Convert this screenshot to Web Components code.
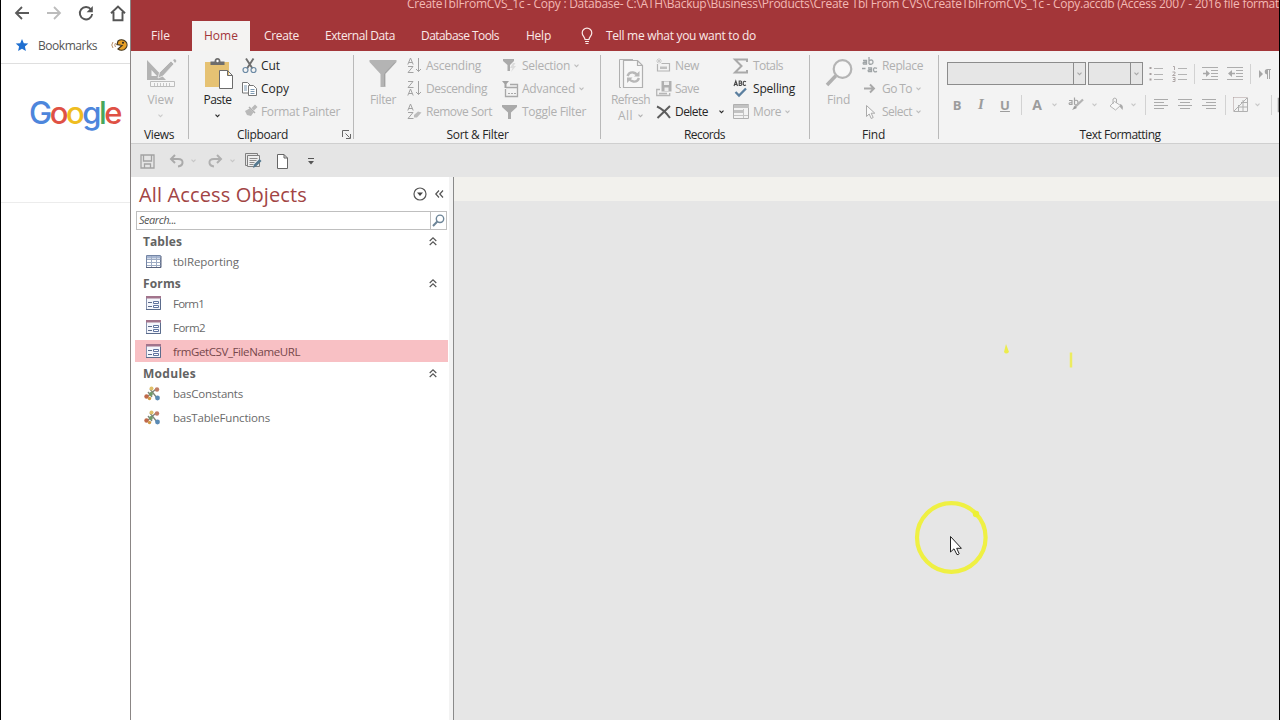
<!DOCTYPE html>
<html lang="en">
<head>
<meta charset="utf-8">
<title>Access</title>
<style>
    html, body { margin: 0; height: 100%; overflow: hidden; }
    body { display: flex; background: #fff; color: #262626; font: 12px "Open Sans", "Noto Sans", sans-serif; }
</style>
</head>
<body>
    <browser-strip></browser-strip>
    <access-window></access-window>
    <pointer-marks></pointer-marks>

    <template id="browserTemplate">
        <style>
            :host { display: flex; flex-direction: column; width: 130px; height: 720px; flex: none; box-sizing: border-box; border-left: 1px solid #000; background: #fff; overflow: hidden; }
            .nav { display: flex; gap: 16px; padding: 5px 0 0 13px; height: 22px; }
            .nav ui-icon { flex: none; }
            .marks { display: flex; align-items: center; height: 36px; padding-left: 14px; border-bottom: 1px solid #dfdfdf; color: #555; }
            .marks fit-text { margin-left: 9px; }
            .marks ui-icon:last-child { margin-left: 14px; }
            .page { height: 139px; border-bottom: 1px solid #ececec; box-sizing: border-box; padding: 29px 0 0 28px; }
            .logo { font: 500 31px/40px Inter, sans-serif; color: #4d86dc; }
            .r { color: #df5145 } .y { color: #efbd20 } .g { color: #46a75c }
        </style>
        <div class="nav"><ui-icon name="back"></ui-icon><ui-icon name="forward"></ui-icon><ui-icon name="reload"></ui-icon><ui-icon name="home"></ui-icon></div>
        <div class="marks"><ui-icon name="star"></ui-icon><fit-text w="59">Bookmarks</fit-text><ui-icon name="pac"></ui-icon></div>
        <div class="page"><fit-text class="logo" w="91">G<span class="r">o</span><span class="y">o</span>g<span class="g">l</span><span class="r">e</span></fit-text></div>
    </template>

    <template id="windowTemplate">
        <style>
            :host { display: flex; flex-direction: column; width: 1150px; height: 720px; box-sizing: border-box; border-left: 1px solid #8b8685; border-right: 1px solid #000; background: #e6e6e6; overflow: hidden; }
            .title { height: 21px; flex: none; background: #a33639; color: #f3b9b5; padding-left: 276px; overflow: hidden; }
            .title fit-text { margin-top: -5px; line-height: 18px; }
            .tabs { display: flex; align-items: center; height: 30px; flex: none; background: #a33639; color: #fbe9e8; }
            .tabs fit-text { line-height: 30px; }
            .home { background: #f4f3f2; color: #a33639; height: 30px; width: 58px; margin: 0 14px 0 22px; text-align: center; box-sizing: border-box; padding-left: 12px; }
            .ribbon { display: flex; height: 92px; flex: none; background: #f3f3f3; border-bottom: 1px solid #cfcfcf; }
            .qat { display: flex; align-items: center; height: 33px; flex: none; padding-left: 9px; padding-top: 1px; box-sizing: border-box; background: #e5e5e5; }
            .main { display: flex; flex: 1; }
            .work { flex: 1; background: #e6e6e6; }
            .work div { height: 24px; background: #f2f1ed; }
        </style>
        <div class="title"><fit-text w="872">CreateTblFromCVS_1c - Copy : Database- C:\ATH\Backup\Business\Products\Create Tbl From CVS\CreateTblFromCVS_1c - Copy.accdb (Access 2007 - 2016 file format</fit-text></div>
        <div class="tabs">
            <fit-text w="19" style="margin-left:20px">File</fit-text>
            <div class="home"><fit-text w="34">Home</fit-text></div>
            <fit-text w="35">Create</fit-text>
            <fit-text w="70" style="margin-left:26px">External Data</fit-text>
            <fit-text w="78" style="margin-left:26px">Database Tools</fit-text>
            <fit-text w="25" style="margin-left:27px">Help</fit-text>
            <ui-icon name="bulb" style="margin-left:30px"></ui-icon>
            <fit-text w="150" style="margin-left:13px">Tell me what you want to do</fit-text>
        </div>
        <div class="ribbon">
            <ribbon-group style="width:58px" label="Views" lw="30" shift="-2">
                <big-button icon="view" off more style="width:56px"><fit-text w="26">View</fit-text></big-button>
            </ribbon-group>
            <ribbon-group style="width:165px" label="Clipboard" lw="51" shift="-18" launcher>
                <big-button icon="paste" more style="width:54px"><fit-text w="28">Paste</fit-text></big-button>
                <command-list>
                    <ribbon-command icon="cut"><fit-text w="19">Cut</fit-text></ribbon-command>
                    <ribbon-command icon="copy"><fit-text w="28">Copy</fit-text></ribbon-command>
                    <ribbon-command icon="brush" off><fit-text w="79">Format Painter</fit-text></ribbon-command>
                </command-list>
            </ribbon-group>
            <ribbon-group style="width:247px" label="Sort &amp; Filter" lw="62">
                <big-button icon="filter" off style="width:54px;padding-left:4px"><fit-text w="26">Filter</fit-text></big-button>
                <command-list style="width:95px">
                    <ribbon-command icon="asc" off><fit-text w="55">Ascending</fit-text></ribbon-command>
                    <ribbon-command icon="desc" off><fit-text w="61">Descending</fit-text></ribbon-command>
                    <ribbon-command icon="unsort" off><fit-text w="66">Remove Sort</fit-text></ribbon-command>
                </command-list>
                <command-list style="--gap:3px">
                    <ribbon-command icon="selection" off more><fit-text w="48">Selection</fit-text></ribbon-command>
                    <ribbon-command icon="advanced" off more><fit-text w="53">Advanced</fit-text></ribbon-command>
                    <ribbon-command icon="toggle" off><fit-text w="64">Toggle Filter</fit-text></ribbon-command>
                </command-list>
            </ribbon-group>
            <ribbon-group style="width:209px" label="Records" lw="41" shift="-2">
                <big-button icon="refresh" off style="width:56px"><fit-text w="39">Refresh</fit-text><fit-text slot="second" w="15">All</fit-text></big-button>
                <command-list style="width:77px">
                    <ribbon-command icon="new" off><fit-text w="24">New</fit-text></ribbon-command>
                    <ribbon-command icon="save" off><fit-text w="24">Save</fit-text></ribbon-command>
                    <ribbon-command icon="delete" more style="--chev:11px"><fit-text w="33">Delete</fit-text></ribbon-command>
                </command-list>
                <command-list style="--gap:3px">
                    <ribbon-command icon="sigma" off><fit-text w="30">Totals</fit-text></ribbon-command>
                    <ribbon-command icon="spell"><fit-text w="42">Spelling</fit-text></ribbon-command>
                    <ribbon-command icon="more" off more><fit-text w="28">More</fit-text></ribbon-command>
                </command-list>
            </ribbon-group>
            <ribbon-group style="width:129px" label="Find" lw="23" shift="-2">
                <big-button icon="find" off style="width:53px;padding-left:4px"><fit-text w="23">Find</fit-text></big-button>
                <command-list style="--gap:3px">
                    <ribbon-command icon="replace" off><fit-text w="41">Replace</fit-text></ribbon-command>
                    <ribbon-command icon="goto" off more><fit-text w="30">Go To</fit-text></ribbon-command>
                    <ribbon-command icon="select" off more><fit-text w="30">Select</fit-text></ribbon-command>
                </command-list>
            </ribbon-group>
            <ribbon-group style="width:340px;border:0" label="Text Formatting" lw="81" shift="22">
                <text-tools></text-tools>
            </ribbon-group>
        </div>
        <div class="qat">
            <ui-icon name="disk"></ui-icon>
            <ui-icon name="undo" style="margin-left:14px"></ui-icon><ui-icon name="chev" style="margin-left:7px;color:#c6c6c6"></ui-icon>
            <ui-icon name="redo" style="margin-left:12px"></ui-icon><ui-icon name="chev" style="margin-left:7px;color:#c6c6c6"></ui-icon>
            <ui-icon name="design" style="margin-left:10px"></ui-icon>
            <ui-icon name="page" style="margin-left:15px"></ui-icon>
            <ui-icon name="custom" style="margin-left:20px"></ui-icon>
        </div>
        <div class="main">
            <nav-pane>
                <nav-group label="Tables" lw="39">
                    <nav-item icon="table"><fit-text w="66">tblReporting</fit-text></nav-item>
                </nav-group>
                <nav-group label="Forms" lw="38">
                    <nav-item icon="form"><fit-text w="31">Form1</fit-text></nav-item>
                    <nav-item icon="form"><fit-text w="32">Form2</fit-text></nav-item>
                    <nav-item icon="form" selected><fit-text w="127">frmGetCSV_FileNameURL</fit-text></nav-item>
                </nav-group>
                <nav-group label="Modules" lw="53">
                    <nav-item icon="module"><fit-text w="70">basConstants</fit-text></nav-item>
                    <nav-item icon="module"><fit-text w="97">basTableFunctions</fit-text></nav-item>
                </nav-group>
            </nav-pane>
            <div class="work"><div></div></div>
        </div>
    </template>

    <template id="toolsTemplate">
        <style>
            :host { display: block; padding: 11px 0 0 8px; color: #a8a8a8; }
            .row { display: flex; align-items: center; height: 23px; white-space: nowrap; }
            .row + .row { margin-top: 8px; }
            .row > * { flex: none; }
            .combo { display: flex; justify-content: flex-end; height: 23px; box-sizing: border-box; border: 1px solid #8c8c8c; background: #e6e6e6; margin-right: 2px; }
            .combo ui-icon { border-left: 1px solid #8c8c8c; padding: 9px 3px 0; height: 12px; }
            i.sep { width: 1px; height: 20px; background: #d2d2d2; }
            b, em, u { font-size: 13px; width: 12px; text-align: center; color: #9c9c9c; }
            em { font-family: "Liberation Serif", serif; font-size: 15px; font-weight: bold; }
            u { font-weight: bold; }
        </style>
        <div class="row">
            <div class="combo" style="width:139px"><ui-icon name="chev"></ui-icon></div>
            <div class="combo" style="width:55px"><ui-icon name="chev"></ui-icon></div>
            <ui-icon name="bullets" style="margin-left:4px"></ui-icon>
            <ui-icon name="numbers" style="margin-left:8px"></ui-icon>
            <i class="sep" style="margin-left:6px"></i>
            <ui-icon name="indent" style="margin-left:7px"></ui-icon>
            <ui-icon name="outdent" style="margin-left:8px"></ui-icon>
            <i class="sep" style="margin-left:6px"></i>
            <ui-icon name="para" style="margin-left:8px"></ui-icon>
        </div>
        <div class="row">
            <b style="margin-left:4px">B</b><em style="margin-left:12px">I</em><u style="margin-left:12px">U</u>
            <i class="sep" style="margin-left:10px"></i>
            <b style="margin-left:9px;font-size:14px">A</b><ui-icon name="chev" style="margin-left:9px;color:#c6c6c6"></ui-icon>
            <ui-icon name="marker" style="margin-left:11px"></ui-icon><ui-icon name="chev" style="margin-left:7px;color:#c6c6c6"></ui-icon>
            <ui-icon name="bucket" style="margin-left:12px"></ui-icon><ui-icon name="chev" style="margin-left:7px;color:#c6c6c6"></ui-icon>
            <i class="sep" style="margin-left:9px"></i>
            <ui-icon name="left" style="margin-left:8px"></ui-icon>
            <ui-icon name="center" style="margin-left:9px"></ui-icon>
            <ui-icon name="right" style="margin-left:9px"></ui-icon>
            <i class="sep" style="margin-left:8px"></i>
            <ui-icon name="grid" style="margin-left:7px"></ui-icon><ui-icon name="chev" style="margin-left:6px;color:#c6c6c6"></ui-icon>
            <i class="sep" style="margin-left:11px"></i>
            <ui-icon name="grid2" style="margin-left:6px"></ui-icon>
        </div>
    </template>

    <template id="paneTemplate">
        <style>
            :host { display: block; width: 323px; box-sizing: border-box; padding: 0 5px 0 4px; border-right: 1px solid #8a8a8a; background: linear-gradient(90deg, #fff 318px, #f3f3f3 318px); color: #6a6a6a; }
            .head { display: flex; align-items: center; height: 34px; color: #a24444; }
            .head fit-text { font-size: 20px; margin-left: 4px; }
            .find { display: flex; height: 19px; width: 311px; margin: 0 0 2px 1px; box-sizing: border-box; border: 1px solid #bfbfbf; font: italic 11px/16px "Open Sans", sans-serif; color: #555; }
            .find fit-text { margin-left: 2px; flex: none; }
            .find span { margin-left: auto; border-left: 1px solid #bfbfbf; padding: 2px 1px 0; }
        </style>
        <div class="head"><fit-text w="168">All Access Objects</fit-text><ui-icon name="drop" style="margin-left:106px"></ui-icon><ui-icon name="shutter" style="margin-left:8px"></ui-icon></div>
        <div class="find"><fit-text w="37">Search...</fit-text><span><ui-icon name="lens"></ui-icon></span></div>
        <slot></slot>
    </template>

    <template id="pointerTemplate">
        <style>
            :host { position: absolute; left: 900px; top: 330px; width: 200px; height: 250px; pointer-events: none; }
        </style>
        <svg width="200" height="250">
            <circle cx="51.3" cy="207.5" r="34.3" fill="none" stroke="#eff043" stroke-width="4.2"/>
            <circle cx="76" cy="184" r="3.2" fill="#ecf034"/>
            <path d="M106 14l3 8q-3 3-5 0z" fill="#ecec4c"/>
            <path d="M171 22.500v15" stroke="#ecec60" stroke-width="2.500"/>
            <path d="M50.500 206.500v15.500l3.500-3.200 2.900 5.700q1.500.500 2.300-.700l-2.500-5.500h4.700z" fill="#fff" stroke="#222" stroke-width="1"/>
        </svg>
    </template>

    <script>
        // [width, height, svg content]
        const icons = {
            back: [16, 16, '<path d="M15 8H2M8 2L2 8l6 6" fill="none" stroke="#5a5a5a" stroke-width="1.8"/>'],
            forward: [16, 16, '<path d="M1 8h13M8 2l6 6-6 6" fill="none" stroke="#bcbcbc" stroke-width="1.8"/>'],
            reload: [16, 16, '<path d="M13 4.500A6.200 6.200 0 1 0 14.200 9" fill="none" stroke="#555" stroke-width="1.900"/><path d="M14.800 1v6.200H8.600z" fill="#555"/>'],
            home: [16, 16, '<path d="M1 8.300L8 1.500l7 6.800M3.500 7v8.200h9V7" fill="none" stroke="#555" stroke-width="1.900"/>'],
            star: [14, 14, '<path d="M7 1l1.800 4.200 4.500.400-3.400 3 1 4.500L7 10.700 3.100 13.100l1-4.500-3.400-3 4.500-.400z" fill="#1f6fd0"/>'],
            pac: [17, 14, '<path d="M2 4q-2.500 3 0 6M4.500 5q-1.500 2 0 4" fill="none" stroke="#b9906a"/><path d="M7 3a5.500 5.200 0 1 1 0 8l4-3.500-5-1z" fill="#e8a026" stroke="#42341c" stroke-width="1.200"/><circle cx="12" cy="4.800" r="1" fill="#222"/>'],
            bulb: [12, 18, '<path d="M4 12.500C4 10 1.200 9 1.200 5.900a4.800 4.800 0 0 1 9.600 0C10.800 9 8 10 8 12.500zM4 14.500h4M4.500 16.500h3" fill="none" stroke="#fbe9e8" stroke-width="1.200"/>'],
            view: [32, 30, '<path d="M2 2v20h19zM6.500 12l5.500 6H6.500z" fill="#b3b3b3" fill-rule="evenodd"/><path d="M13 20l1.500-5.500L26 3l3 3-11 12z" fill="#b3b3b3" stroke="#f3f3f3" stroke-width=".8"/><path d="M28 2l2-1 1.500 2-1.500 2z" fill="#b3b3b3"/><path d="M5.500 23.500h24v5h-24z" fill="#f6f6f6" stroke="#bdbdbd"/><path d="M9.500 25v3M12.500 25v3M15.500 25v3M18.500 25v3M21.500 25v3M24.500 25v3" stroke="#c6c6c6"/>'],
            paste: [32, 32, '<path d="M3 4h24v25H3z" fill="#e6c273"/><path d="M8.500 7V3.500h4q0-3.500 3-3.500t3 3.500h4V7z" fill="#6d6d6d"/><circle cx="15.500" cy="3" r="1.200" fill="#fff"/><path d="M17.500 12.500h8l5 5v13h-13zM25.500 12.500v5h5" fill="#fff" stroke="#6c6c6c"/>'],
            cut: [16, 16, '<path d="M4 .500l6.500 10M11.500.500L5 10.500" stroke="#6e6e6e" stroke-width="1.900"/><circle cx="3.500" cy="12" r="2.500" fill="none" stroke="#6c8aa5" stroke-width="1.200"/><circle cx="11.500" cy="12" r="2.500" fill="none" stroke="#6c8aa5" stroke-width="1.200"/>'],
            copy: [16, 16, '<path d="M.500 1.500h5l2.500 2.500v8H.500z" fill="#fff" stroke="#777"/><path d="M2 5h3M2 7h3M2 9h3" stroke="#7f9ab3"/><path d="M6.500 4.500h5l3 3v7h-8z" fill="#fff" stroke="#777"/><path d="M8.500 8.500h4M8.500 10.500h4M8.500 12.500h4" stroke="#7f9ab3"/>'],
            brush: [16, 16, '<path d="M3 7l4.500-2.500 4 4L9 12l-4-1zM9.500 4L13 .500 15.500 3 12 6.500z" fill="#b9b9b9"/><path d="M7 3l6 6" stroke="#b0b0b0" stroke-width="1.500"/>'],
            filter: [32, 30, '<path d="M2.500 2h27v2L18.500 16v13h-5V16L2.500 4z" fill="#b4b4b4"/><path d="M17.500 16v12M28 4.500L17.500 15.500" fill="none" stroke="#a2a2a2"/>'],
            asc: [16, 17, '<g fill="none" stroke="#a2a2a2"><path d="M.800 7.500L3.500 1l2.700 6.500M1.800 5.500h3.500M1 9.500h5L1 15.500h5.500M11.500 1v13.500M9 12l2.500 2.500L14 12"/></g>'],
            desc: [16, 17, '<g fill="none" stroke="#a2a2a2"><path d="M1 1.500h5L1 7.500h5.500M.800 15.500L3.500 9l2.700 6.500M1.800 13.500h3.500M11.500 1v13.500M9 12l2.500 2.500L14 12"/></g>'],
            unsort: [16, 17, '<path d="M.800 7.500L3.500 1l2.700 6.500M1.800 5.500h3.500M1 9.500h5L1 15.500h5.500" fill="none" stroke="#a2a2a2"/><path d="M7 12l4-3.500 3.500 1-4.500 5H7z" fill="#bcbcbc"/>'],
            selection: [16, 16, '<path d="M1 1h11v2L8 7v6H5.500V7L1 3z" fill="#aaa"/><path d="M11 5L8 10h2.500L9 14l5-6h-2.500l2-3z" fill="#dcdcdc"/>'],
            advanced: [16, 16, '<path d="M0 0h7L4.500 3v4h-2V3z" fill="#a2a2a2"/><path d="M8 3.500h7.500v12h-12V8M4 6.500h11.500" fill="none" stroke="#a8a8a8" stroke-width="1.300"/><path d="M6 12.500h8" stroke="#a8a8a8" stroke-dasharray="2 1"/>'],
            toggle: [16, 16, '<path d="M0 1h15v2L9 8.500V15H6V8.500L0 3z" fill="#aaa"/>'],
            refresh: [32, 32, '<path d="M6 29.500H4.500v-28H18" fill="none" stroke="#b0b0b0"/><path d="M8.500 2.500h14l5 5v22h-19zM22.500 2.500v5h5" fill="#f7f7f7" stroke="#b0b0b0" stroke-width="1.200"/><path d="M12.500 18q1.500-4 5.500-3.500 2.500.500 4 2M24 20q-1.500 4-5.500 3.500-2.500-.500-4-2" fill="none" stroke="#b8b8b8" stroke-width="2.300"/><path d="M24.500 13v5.500H19zM12 25v-5.500h5.500z" fill="#b8b8b8"/>'],
            new: [16, 16, '<path d="M5.500 5.500h8v7.500H1.500V6" fill="none" stroke="#b4b4b4" stroke-width="1.200"/><path d="M3 0v5.500M0 3h6M1 1l4 4M5 1L1 5" stroke="#cacaca" stroke-width=".9"/><path d="M4 8.500h7V11H4z" fill="#c0c0c0"/>'],
            save: [16, 16, '<path d="M5.500 0h10v10.500h-10z" fill="#b0b0b0"/><path d="M8 .500h5V4H8zM8.500 6.500h4V10h-4z" fill="#ededed"/><path d="M4 8.500H.700v6h13V12M3 12.500h8" fill="none" stroke="#b6b6b6" stroke-width="1.300"/>'],
            delete: [16, 16, '<path d="M1 2.500q7 3 13 11.500M14 2L1.500 14" fill="none" stroke="#5c5c5c" stroke-width="2"/>'],
            sigma: [16, 16, '<path d="M14 4V1.500H2L8.500 8 2 14.500h12v-2.500" fill="none" stroke="#a9a9a9" stroke-width="2"/>'],
            spell: [16, 18, '<g fill="none" stroke="#444" stroke-width="1.100"><path d="M1 6L2.800 1 4.500 6M1.500 4.500H4M6.200 1v4.500h1.500q2.500-1.200 0-2.300 2-1.200 0-2.200zM13 1.800q-2.800-1.500-2.800 1.500 0 3 2.800 1.800"/></g><path d="M2.500 12L6 15.500 13 8.500" fill="none" stroke="#5b7f9f" stroke-width="2.300"/>'],
            more: [16, 16, '<path d="M.500.500h15v14H.500z" fill="none" stroke="#b0b0b0"/><path d="M1 1h15v3H1zM1 6h10v3H1z" fill="#c2c2c2"/><path d="M10.500 5v9M1 11.500h14" stroke="#c4c4c4"/>'],
            find: [30, 30, '<circle cx="18.500" cy="11" r="8.800" fill="#f7f7f7" stroke="#b4b4b4" stroke-width="2.200"/><path d="M11.800 17.800L3 27" stroke="#b0b0b0" stroke-width="3.500"/>'],
            replace: [16, 17, '<g fill="none" stroke="#9fa4a6" stroke-width="1.300"><path d="M1 3.500h3.500V7H1.500Q0 5 4 5M7 0v7M7 3.500q4-1.500 4 1.500T7 7M6 11h3.500v3.500H6.500Q5 12.500 9 12.500M15 11.300q-3.500-1.500-3.500 1.500t3.500 1.500M0 11.500h3.500"/></g>'],
            goto: [16, 16, '<path d="M2 7.500h10M8 3.500l4 4-4 4" fill="none" stroke="#a9a9a9" stroke-width="1.900"/>'],
            select: [16, 16, '<path d="M4.500 1.500v11l2.700-2.500 2 4.500 2-1-2-4.300h3.600z" fill="#f8f8f8" stroke="#aaa"/>'],
            chev: [5, 4, '<path d="M.500.700l2 2 2-2" fill="none" stroke="currentColor" stroke-width="1.100"/>'],
            launch: [9, 9, '<path d="M.500 7V.500H7M3.500 3.500l4 4M8.500 4v4.500H4" fill="none" stroke="#666"/>'],
            disk: [15, 15, '<path d="M1 1h13v13H1zM3.500 1v6h8V1M4.500 14v-4h6v4" fill="none" stroke="#a2a2a2" stroke-width="1.300"/>'],
            undo: [15, 14, '<path d="M6 1L2 5l4 4M2 5h7q5 0 4.500 4-.500 3-4.500 3.500" fill="none" stroke="#aaa" stroke-width="2"/>'],
            redo: [15, 14, '<path d="M9 1l4 4-4 4M13 5H6q-5 0-4.500 4 .500 3 4.500 3.500" fill="none" stroke="#b0b0b0" stroke-width="2"/>'],
            design: [17, 16, '<path d="M2 12.500H.500V.500h12V2" fill="none" stroke="#808080"/><path d="M2.500 2.500h12v11h-12z" fill="#eee" stroke="#808080"/><path d="M4.500 5.500h8M4.500 7.500h7M4.500 9.500h5M4.500 11.500h4" stroke="#8c8c8c"/><path d="M8 15l1-3.500 5.500-5.500 2 2-5.500 5.500z" fill="#54788f"/>'],
            page: [11, 15, '<path d="M.500.500H7l3.500 3.500v10.500H.500zM7 .500V4h3.500" fill="#fff" stroke="#666"/>'],
            custom: [6, 7, '<path d="M0 .500h6" stroke="#555"/><path d="M0 3h6L3 6.500z" fill="#555"/>'],
            bullets: [15, 16, '<path d="M5 2.500h9M5 8.500h9M5 13.500h9" stroke="#b4b4b4"/><path d="M.500 1h2v2h-2zM.500 7h2v2h-2zM.500 12.500h2v2h-2z" fill="#a8a0a0"/>'],
            numbers: [16, 16, '<path d="M6 2.500h9M6 8.500h9M6 13.500h9" stroke="#b4b4b4"/><path d="M1 .500h1.500V4M.500 6h2.500v1.500L.500 9.500h3M.500 11.500h2.500v4H.500M1 13.500h2" fill="none" stroke="#a8a0a0" stroke-width=".9"/>'],
            indent: [17, 15, '<path d="M0 1.500h16M9 4.500h7M9 7.500h7M9 10.500h7M0 13.500h16" stroke="#adadad"/><path d="M1 6.700h3V4l4 3.500L4 11V8.300H1z" fill="#a8a8a8"/>'],
            outdent: [17, 15, '<path d="M0 1.500h16M9 4.500h7M9 7.500h7M9 10.500h7M0 13.500h16" stroke="#adadad"/><path d="M8 6.700H5V4L1 7.500 5 11V8.300h3z" fill="#a8a8a8"/>'],
            para: [14, 12, '<path d="M0 2l4 4-4 4z" fill="#a5a5a5"/><path d="M8.500 11V1.500M10.500 11V1.500M12 1.500H8" fill="none" stroke="#a5a5a5"/><path d="M8.500 1a2.700 2.700 0 0 0 0 5.500z" fill="#a5a5a5"/>'],
            marker: [17, 16, '<path d="M1 3.500h3v4H1.500Q0 5.500 4 5.500M6.500.500v7M6.500 3.500q3.500-1 3.500 2t-3.500 2" fill="none" stroke="#a3a3a3" stroke-width="1.200"/><path d="M6 11L15 2.500" stroke="#b4b4b4" stroke-width="2.300"/><path d="M4 13l3-4 2 2z" fill="#999"/>'],
            bucket: [15, 16, '<path d="M5.500 4.500l6 4-5 4.500-5.500-4z" fill="#f8f8f8" stroke="#b6b6b6"/><path d="M4 7V2q2-2 3.500 0v4" fill="none" stroke="#b0b0b0"/><path d="M11 7q4 1 2.500 6L11 10z" fill="#ababab"/>'],
            left: [15, 13, '<path d="M0 1.500h14M0 4.500h10M0 7.500h14M0 10.500h10" stroke="#ababab"/>'],
            center: [15, 13, '<path d="M0 1.500h14M2 4.500h10M0 7.500h14M2 10.500h10" stroke="#ababab"/>'],
            right: [15, 13, '<path d="M0 1.500h14M4 4.500h10M0 7.500h14M4 10.500h10" stroke="#ababab"/>'],
            grid: [16, 16, '<path d="M.500.500h14M.500.500v14" stroke="#a99" stroke-dasharray="1 1"/><path d="M.500 14.500h14V.500M5.500 8v6M10 3v11M5 10h9M8 5.500h6M1 14L14 1" fill="none" stroke="#b0b0b0"/>'],
            grid2: [16, 14, '<path d="M.500.500h14v13H.500zM.500 7h14" fill="none" stroke="#999" stroke-width="1.500"/>'],
            table: [16, 14, '<path d="M.500.500h14v12H.500z" fill="#fff" stroke="#7485a5"/><path d="M1 1h14v2.500H1z" fill="#a7b7d2"/><path d="M1 4.500h14M1 7.500h14M1 10.500h14M5.500 1v12M10.500 1v12" stroke="#9eacc4"/><path d="M0 12.500h15V1" fill="none" stroke="#59637c"/>'],
            form: [16, 15, '<path d="M.500.500h14v13H.500z" fill="#f4f6fc" stroke="#8793af"/><path d="M0 0h15v2.500H0z" fill="#a2748c"/><path d="M2 6.500h4M2 10.500h4" stroke="#5c6c8c" stroke-width="1.200"/><path d="M7.500 5.500h5v2h-5zM7.500 9.500h5v2h-5z" fill="#fff" stroke="#6074a0"/><path d="M0 13.500h14.500V3" fill="none" stroke="#5b6c8c"/>'],
            module: [17, 15, '<path d="M3 11L12 3M6 3l7 9M4 6l4 5" stroke="#7d857a" stroke-width="1.300"/><circle cx="2.500" cy="10.500" r="2.200" fill="#c0694a"/><circle cx="7.500" cy="2.600" r="2" fill="#dfc06a"/><circle cx="13" cy="3.500" r="2.200" fill="#c07c66"/><circle cx="7" cy="8" r="1.900" fill="#6f9a68"/><circle cx="5.500" cy="12.500" r="1.700" fill="#cf9a48"/><circle cx="13.500" cy="12" r="2.400" fill="#5a8ab5"/>'],
            drop: [14, 14, '<circle cx="7" cy="7" r="6" fill="none" stroke="#555" stroke-width="1.200"/><path d="M4 5.500h6L7 9z" fill="#444"/>'],
            shutter: [9, 8, '<path d="M4 .500L.800 4 4 7.500M8 .500L4.800 4 8 7.500" fill="none" stroke="#555" stroke-width="1.200"/>'],
            lens: [13, 13, '<circle cx="8" cy="4.800" r="3.700" fill="#fff" stroke="#6d8598" stroke-width="1.400"/><path d="M5.300 7.500L1 12" stroke="#6d8598" stroke-width="2"/>'],
            fold: [8, 9, '<path d="M.700 4L4 .900 7.300 4M.700 8L4 4.900 7.300 8" fill="none" stroke="#555" stroke-width="1.200"/>']
        };

        const shadow = (el, html) => el.attachShadow({mode: 'open'}).innerHTML = html;

        class UiIcon extends HTMLElement {
            connectedCallback() {
                const [w, h, body] = icons[this.getAttribute('name')];
                shadow(this, `<style>:host { display: inline-block; flex: none; line-height: 0 } svg { display: block; overflow: visible }</style>
                    <svg width="${w}" height="${h}" viewBox="0 0 ${w} ${h}">${body}</svg>`);
            }
        }

        // label tracked to a set width
        class FitText extends HTMLElement {
            connectedCallback() {
                shadow(this, '<style>:host { display: block; white-space: nowrap } span { display: inline-block }</style><span><slot></slot></span>');
                const w = +this.getAttribute('w');
                const span = this.shadowRoot.querySelector('span');
                this.style.width = w + 'px';
                requestAnimationFrame(() => {
                    const gap = (w - span.getBoundingClientRect().width) / this.textContent.length;
                    span.style.letterSpacing = gap + 'px';
                });
            }
        }

        class RibbonGroup extends HTMLElement {
            connectedCallback() {
                const shift = this.getAttribute('shift') || 0;
                shadow(this, `<style>
                    :host { display: flex; flex-direction: column; flex: none; position: relative; box-sizing: border-box; height: 92px; }
                    :host::after { content: ""; position: absolute; right: 0; top: 4px; width: 1px; height: 84px; background: #b9b9b9; }
                    :host([style*="border"])::after { display: none }
                    .body { display: flex; height: 76px; flex: none; }
                    .label { display: flex; justify-content: center; line-height: 16px; padding-left: ${Math.max(0, shift)}px; padding-right: ${Math.max(0, -shift)}px; }
                    .launch { position: absolute; right: 3px; bottom: 4px; }
                </style>
                <div class="body"><slot></slot></div>
                <div class="label"><fit-text w="${this.getAttribute('lw')}">${this.getAttribute('label').replace('&', '&amp;')}</fit-text></div>
                ${this.hasAttribute('launcher') ? '<ui-icon class="launch" name="launch"></ui-icon>' : ''}`);
            }
        }

        class BigButton extends HTMLElement {
            connectedCallback() {
                shadow(this, `<style>
                    :host { display: flex; flex-direction: column; align-items: center; flex: none; padding-left: 3px; box-sizing: border-box; line-height: 16px; }
                    :host([off]) { color: #b0b0b0; }
                    .pic { height: 34px; padding-top: 7px; box-sizing: content-box; }
                    .more { margin-top: 6px; }
                    :host([off]) .more { color: #cacaca; }
                    .second { display: flex; align-items: center; gap: 5px; }
                </style>
                <div class="pic"><ui-icon name="${this.getAttribute('icon')}"></ui-icon></div>
                <slot></slot>
                ${this.hasAttribute('more') ? '<ui-icon class="more" name="chev"></ui-icon>' : ''}
                ${this.querySelector('[slot]') ? '<div class="second"><slot name="second"></slot><ui-icon name="chev"></ui-icon></div>' : ''}`);
            }
        }

        class CommandList extends HTMLElement {
            connectedCallback() {
                shadow(this, '<style>:host { display: block; flex: none; padding-top: 3px }</style><slot></slot>');
            }
        }

        class RibbonCommand extends HTMLElement {
            connectedCallback() {
                shadow(this, `<style>
                    :host { display: flex; align-items: center; height: 23px; }
                    :host([off]) { color: #b0b0b0; }
                    .icon { margin-left: -1px; }
                    .label { margin-left: calc(var(--gap, 2px) + 1px); }
                    .chev { margin-left: var(--chev, 4px); }
                    :host([off]) .chev { color: #bcbcbc; }
                </style>
                <ui-icon class="icon" name="${this.getAttribute('icon')}"></ui-icon>
                <div class="label"><slot></slot></div>
                ${this.hasAttribute('more') ? '<ui-icon class="chev" name="chev"></ui-icon>' : ''}`);
            }
        }

        class NavGroup extends HTMLElement {
            connectedCallback() {
                shadow(this, `<style>
                    :host { display: block; }
                    .head { display: flex; align-items: center; justify-content: space-between; height: 18px; padding: 0 11px 0 8px; font-weight: bold; color: #636363; }
                </style>
                <div class="head"><fit-text w="${this.getAttribute('lw')}">${this.getAttribute('label')}</fit-text><ui-icon name="fold"></ui-icon></div>
                <slot></slot>`);
            }
        }

        class NavItem extends HTMLElement {
            connectedCallback() {
                shadow(this, `<style>
                    :host { display: flex; align-items: center; height: 23px; padding: 0 0 1px 11px; font-size: 11.5px; }
                    :host([selected]) { height: 22px; padding-bottom: 0; margin-bottom: 2px; background: #f8c0c4; color: #76474b; }
                    div { width: 27px; display: flex; }
                    [name=module] { margin-left: -2px; }
                </style>
                <div><ui-icon name="${this.getAttribute('icon')}"></ui-icon></div><slot></slot>`);
            }
        }

        const fromTemplate = (tag, tpl) => customElements.define(tag, class extends HTMLElement {
            connectedCallback() {
                this.attachShadow({mode: 'open'}).append(tpl.content.cloneNode(true));
            }
        });

        customElements.define('ui-icon', UiIcon);
        customElements.define('fit-text', FitText);
        customElements.define('ribbon-group', RibbonGroup);
        customElements.define('big-button', BigButton);
        customElements.define('command-list', CommandList);
        customElements.define('ribbon-command', RibbonCommand);
        customElements.define('nav-group', NavGroup);
        customElements.define('nav-item', NavItem);
        fromTemplate('text-tools', toolsTemplate);
        fromTemplate('nav-pane', paneTemplate);
        fromTemplate('browser-strip', browserTemplate);
        fromTemplate('access-window', windowTemplate);
        fromTemplate('pointer-marks', pointerTemplate);
    </script>
</body>
</html>
